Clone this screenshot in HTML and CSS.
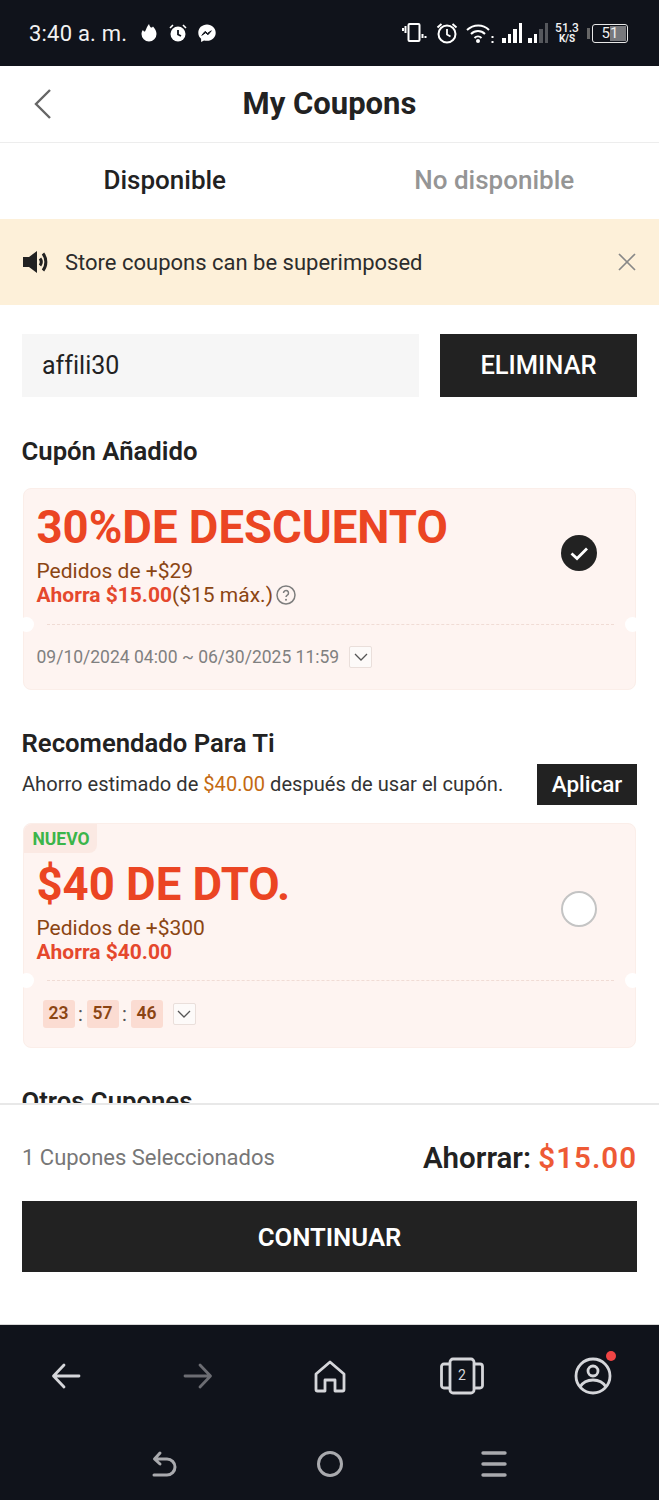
FILE: index.html
```html
<!DOCTYPE html>
<html>
<head>
  <title>My Coupons</title>
  <link rel="stylesheet" href="styles.css">
</head>
<body>

<div class="status">
  <div class="status-left">
    <span class="clock">3:40 a. m.</span>
    <svg class="st-icon" width="22" height="22" viewBox="0 0 22 22"><path fill="#fff" d="M11 2c1 3 2 4 3 3.500l1-1c2 2 3.500 5 3.500 7.500a7.500 7.500 0 0 1-15 0c0-1.500.5-3 1.500-4 .5 1 1 1.500 2 1.500C8.500 7 9 4 11 2z"/></svg>
    <svg class="st-icon" width="22" height="22" viewBox="0 0 22 22"><circle cx="11" cy="12" r="7.500" fill="#fff"/><path d="M11 8v4.500l3 1.500" fill="none" stroke="#10131b" stroke-width="1.800"/><path d="M3 6l3-3M19 6l-3-3" stroke="#fff" stroke-width="1.600"/></svg>
    <svg class="st-icon" width="22" height="22" viewBox="0 0 22 22"><path fill="#fff" d="M11 2.500c-5 0-8.700 3.600-8.700 8.200 0 2.500 1 4.600 2.800 6.100V20l2.900-1.600c.9.300 1.900.4 3 .4 5 0 8.700-3.600 8.700-8.100S16 2.500 11 2.500z"/><path d="M5.800 13.300l3.300-3.900 2.400 2 3.800-2.600-3.300 3.900-2.400-2z" fill="#10131b" stroke="#10131b" stroke-width="1"/></svg>
  </div>
  <div class="status-right">
    <svg width="27" height="24" viewBox="0 0 27 24"><rect x="7.500" y="3" width="11" height="17" rx="1" fill="none" stroke="#fff" stroke-width="2"/><path d="M2 7v3M4.500 5v7M21.500 13v4M24.500 15v2" stroke="#fff" stroke-width="2"/></svg>
    <svg width="24" height="24" viewBox="0 0 24 24"><circle cx="12" cy="13" r="8.500" fill="none" stroke="#fff" stroke-width="2"/><path d="M12 8v5.500l3.500 2" fill="none" stroke="#fff" stroke-width="1.800"/><path d="M2.500 6.500L6.500 3M21.500 6.500L17.500 3" stroke="#fff" stroke-width="2"/></svg>
    <svg width="29" height="24" viewBox="0 0 29 24"><g fill="none" stroke="#fff" stroke-width="2"><path d="M1 9c6.500-6 16-6 22 0"/><path d="M5 13c4-4 10-4 14 0"/><path d="M8.500 17c2-2 5-2 7 0"/></g><circle cx="12" cy="20" r="2" fill="#fff"/><path d="M26.500 15v2M26.500 20v2" stroke="#fff" stroke-width="2"/></svg>
    <div class="bars"><i class="b1"></i><i class="b2"></i><i class="b3"></i><i class="b4"></i></div>
    <div class="bars next"><i class="b1"></i><i class="b2"></i><i class="b3 dim"></i><i class="b4 dim"></i></div>
    <div class="speed"><span>51.3</span><span>K/S</span></div>
    <div class="battery"><i class="nub"></i><div class="cell"><i class="fill"></i><span>51</span></div></div>
  </div>
</div>

<div class="header">
  <svg class="back" width="22" height="32" viewBox="0 0 22 32"><path d="M19 2L5 16l14 14" fill="none" stroke="#666" stroke-width="2.400"/></svg>
  <h1>My Coupons</h1>
</div>

<div class="tabs">
  <div class="tab on">Disponible</div>
  <div class="tab">No disponible</div>
</div>

<div class="notice">
  <svg width="28" height="26" viewBox="0 0 28 26"><path fill="#222" d="M1 8h6l8-6v22l-8-6H1z"/><path d="M18 9.500c1.500 2 1.500 5 0 7M21 4.500c3.800 4.800 3.800 12.200 0 17" fill="none" stroke="#222" stroke-width="3"/></svg>
  <span class="notice-text">Store coupons can be superimposed</span>
  <svg class="notice-x" width="18" height="18" viewBox="0 0 18 18"><path d="M1 1l16 16M17 1L1 17" stroke="#888" stroke-width="1.700"/></svg>
</div>

<div class="main">
  <div class="code-row">
    <div class="code-input">affili30</div>
    <div class="code-btn">ELIMINAR</div>
  </div>

  <h2 class="added-title">Cupón Añadido</h2>

  <div class="coupon">
    <div class="coupon-top">
      <div class="coupon-info">
        <div class="amount">30%DE DESCUENTO</div>
        <div class="line">Pedidos de +$29</div>
        <div class="line"><b>Ahorra $15.00</b>($15 máx.)<svg class="help" width="20" height="20" viewBox="0 0 20 20"><circle cx="10" cy="10" r="9" fill="none" stroke="#7d7d7d" stroke-width="1.500"/><path d="M7.500 8a2.500 2.500 0 1 1 3.800 2.100c-.9.600-1.300 1-1.300 2" fill="none" stroke="#7d7d7d" stroke-width="1.500"/><circle cx="10" cy="14.800" r="1" fill="#7d7d7d"/></svg></div>
      </div>
      <svg class="pick" width="36" height="36" viewBox="0 0 36 36"><circle cx="18" cy="18" r="18" fill="#222"/><path d="M10.500 18.500l5.500 5 10-10" fill="none" stroke="#fff" stroke-width="2.800"/></svg>
    </div>
    <div class="coupon-cut"></div>
    <div class="coupon-bottom">
      <span class="dates">09/10/2024 04:00 ~ 06/30/2025 11:59</span>
      <span class="more"><svg width="14" height="8" viewBox="0 0 14 8"><path d="M1 1l6 6 6-6" fill="none" stroke="#555" stroke-width="1.300"/></svg></span>
    </div>
  </div>

  <h2 class="rec-title">Recomendado Para Ti</h2>
  <div class="rec-row">
    <div class="rec-text">Ahorro estimado de <em>$40.00</em> después de usar el cupón.</div>
    <div class="apply">Aplicar</div>
  </div>

  <div class="coupon second">
    <div class="tag">NUEVO</div>
    <div class="coupon-top">
      <div class="coupon-info">
        <div class="amount">$40 DE DTO.</div>
        <div class="line">Pedidos de +$300</div>
        <div class="line"><b>Ahorra $40.00</b></div>
      </div>
      <span class="pick-empty"></span>
    </div>
    <div class="coupon-cut"></div>
    <div class="coupon-bottom timer">
      <span class="digit">23</span><span class="colon">:</span><span class="digit">57</span><span class="colon">:</span><span class="digit">46</span>
      <span class="more"><svg width="14" height="8" viewBox="0 0 14 8"><path d="M1 1l6 6 6-6" fill="none" stroke="#555" stroke-width="1.300"/></svg></span>
    </div>
  </div>

  <h2 class="other-title">Otros Cupones</h2>
</div>

<div class="checkout">
  <div class="summary">
    <span class="selected">1 Cupones Seleccionados</span>
    <span class="saved">Ahorrar: <em>$15.00</em></span>
  </div>
  <div class="continue">CONTINUAR</div>
</div>

<div class="browser">
  <div class="browser-row">
    <svg width="32" height="32" viewBox="0 0 32 32"><path d="M29 16H4M14 5L3.500 16 14 27" fill="none" stroke="#d5d6da" stroke-width="2.800" stroke-linecap="round" stroke-linejoin="round"/></svg>
    <svg width="32" height="32" viewBox="0 0 32 32"><path d="M3 16h25M18 5l10.500 11L18 27" fill="none" stroke="#6c6d73" stroke-width="2.800" stroke-linecap="round" stroke-linejoin="round"/></svg>
    <svg width="32" height="34" viewBox="0 0 32 34"><path d="M2 15L16 3l14 12v15.500a1.500 1.500 0 0 1-1.500 1.500H21V21h-10v11H3.500A1.500 1.500 0 0 1 2 30.500z" fill="none" stroke="#d5d6da" stroke-width="2.800" stroke-linejoin="round"/></svg>
    <div class="tabs-ico">
      <svg width="44" height="38" viewBox="0 0 44 38"><rect x="10" y="2" width="24" height="34" rx="3" fill="none" stroke="#d5d6da" stroke-width="2.800"/><path d="M10 7H4a2.500 2.500 0 0 0-2.500 2.500v19A2.500 2.500 0 0 0 4 31h6M34 7h6a2.500 2.500 0 0 1 2.500 2.500v19A2.500 2.500 0 0 1 40 31h-6" fill="none" stroke="#d5d6da" stroke-width="2.800"/></svg>
      <span>2</span>
    </div>
    <div class="user-ico">
      <svg width="38" height="38" viewBox="0 0 38 38"><circle cx="19" cy="19" r="17" fill="none" stroke="#d5d6da" stroke-width="2.800"/><circle cx="19" cy="14" r="5" fill="none" stroke="#d5d6da" stroke-width="2.800"/><path d="M6 30c3-5 8-7 13-7s10 2 13 7" fill="none" stroke="#d5d6da" stroke-width="2.800"/></svg>
      <i class="dot"></i>
    </div>
  </div>
  <div class="sys-row">
    <svg width="26" height="28" viewBox="0 0 26 28"><path d="M2 25h13a8 8 0 0 0 0-16H3M8 3L2.500 9 8 14" fill="none" stroke="#a9aaae" stroke-width="3" stroke-linecap="round" stroke-linejoin="round"/></svg>
    <svg width="26" height="26" viewBox="0 0 26 26"><circle cx="13" cy="13" r="11.500" fill="none" stroke="#a9aaae" stroke-width="3"/></svg>
    <svg width="26" height="26" viewBox="0 0 26 26"><path d="M2 2h22M2 13h22M2 24h22" stroke="#a9aaae" stroke-width="3.400" stroke-linecap="round"/></svg>
  </div>
</div>

</body>
</html>
```

FILE: styles.css
```css
* { box-sizing: border-box; }
body { margin: 0; width: 659px; height: 1500px; overflow: hidden; display: flex; flex-direction: column; background: #fff; color: #222; font-family: Roboto, "Liberation Sans", sans-serif; }
h1, h2 { margin: 0; }

.status { height: 66px; background: #10131b; display: flex; justify-content: space-between; align-items: center; padding: 0 31px 0 29px; color: #f2f2f2; }
.status-left { display: flex; align-items: center; gap: 7px; }
.clock { font-size: 22px; margin-right: 4px; letter-spacing: .2px; }
.status-right { display: flex; align-items: center; gap: 7px; }
.bars { display: flex; align-items: flex-end; gap: 2px; height: 20px; }
.bars i { width: 3.500px; background: #fff; display: block; }
.bars .b1 { height: 5px; }
.bars .b2 { height: 9px; }
.bars .b3 { height: 14px; }
.bars .b4 { height: 20px; }
.bars .dim { background: #55575c; }
.bars.next { margin-left: -1px; }
.speed { display: flex; flex-direction: column; align-items: center; font-size: 12px; font-weight: 500; line-height: 11px; width: 26px; margin-left: -1px; }
.speed span:last-child { font-size: 10px; font-weight: 700; line-height: 10px; }
.battery { display: flex; align-items: center; }
.nub { width: 3px; height: 11px; background: #666; margin-right: 2px; display: block; }
.cell { position: relative; width: 36px; height: 19px; border: 1.500px solid #e8e8e8; border-radius: 3px; display: flex; align-items: center; justify-content: center; font-size: 15px; color: #eee; line-height: 1; }
.cell span { position: relative; }
.fill { position: absolute; left: 17px; top: 1px; bottom: 1px; right: 1px; background: #77787c; display: block; }

.header { height: 77px; padding-bottom: 2px; border-bottom: 1px solid #ededed; display: flex; align-items: center; justify-content: center; position: relative; }
.header h1 { font-size: 31px; font-weight: 700; color: #222; }
.back { position: absolute; left: 31px; top: 22px; }

.tabs { height: 76px; padding-bottom: 2px; display: flex; }
.tab { width: 50%; display: flex; align-items: center; justify-content: center; font-size: 26px; font-weight: 500; color: #959595; }
.tab.on { color: #222; }

.notice { height: 86px; background: #fdf0d9; display: flex; align-items: center; padding: 0 22px; }
.notice-text { margin-left: 15px; font-size: 22px; color: #2c2c2c; }
.notice-x { margin-left: auto; margin-right: 1px; }

.main { flex: 1; min-height: 0; overflow: hidden; padding: 29px 22px 0; }
.code-row { display: flex; justify-content: space-between; }
.code-input { width: 397px; height: 63px; background: #f6f6f6; display: flex; align-items: center; padding-left: 20px; font-size: 25px; color: #222; font-variant-ligatures: none; }
.code-btn { width: 197px; height: 63px; padding-bottom: 2px; background: #222; color: #fff; display: flex; align-items: center; justify-content: center; font-size: 25.500px; font-weight: 500; }

h2 { font-size: 25.700px; font-weight: 600; color: #222; line-height: 30px; margin-left: -.5px; }
.added-title { margin-top: 39px; }
.rec-title { margin-top: 38px; }

.coupon { position: relative; margin: 22px 0 0 .5px; width: 613.500px; background: #fef4f1; border: 1px solid #fbeee9; border-radius: 8px; }
.coupon-top { height: 135px; padding: 14px 13px 0; display: flex; justify-content: space-between; }
.amount { font-size: 45.500px; font-weight: 700; color: #eb4523; line-height: 50px; }
.line { font-size: 21px; line-height: 24px; color: #8b4513; display: flex; align-items: center; }
.amount + .line { margin-top: 6px; }
.line b { color: #e5482d; font-weight: 700; }
.help { margin-left: 3px; }
.pick { margin: 32px 25px 0 0; }
.pick-empty { width: 36px; height: 36px; margin: 31px 25px 0 0; border: 2px solid #c4c4c4; border-radius: 50%; background: #fff; }
.coupon-cut { position: relative; margin: 0 21px 0 23px; border-top: 1px dashed #f0dcd5; height: 0; }
.coupon-cut::before, .coupon-cut::after { content: ""; position: absolute; top: -8px; width: 15px; height: 15px; border-radius: 50%; background: #fff; }
.coupon-cut::before { left: -28px; }
.coupon-cut::after { right: -26px; }
.coupon-bottom { height: 64px; padding: 0 13px; display: flex; align-items: center; font-size: 17.500px; color: #808080; }
.more { display: flex; align-items: center; justify-content: center; width: 23px; height: 22px; margin-left: 10px; border: 1px solid #eadfdb; border-radius: 2px; background: #fdfaf9; }

.rec-row { display: flex; justify-content: space-between; align-items: center; margin-top: 6px; }
.rec-text { font-size: 20.100px; color: #333; margin-top: -2px; }
.rec-text em { font-style: normal; color: #c46a12; }
.apply { width: 100px; height: 41px; padding-bottom: 2px; background: #222; color: #fff; display: flex; align-items: center; justify-content: center; font-size: 22.500px; font-weight: 500; }

.second { margin-top: 18px; }
.second .coupon-top { height: 156px; padding-top: 36px; }
.tag { position: absolute; left: 0; top: 0; width: 73px; height: 29px; padding-left: 2px; background: #fbe9e3; border-radius: 8px 0 8px 0; color: #3bb54a; font-size: 17.500px; font-weight: 700; display: flex; align-items: center; justify-content: center; }
.timer { height: 66px; padding-left: 19px; }
.digit { width: 32px; height: 28px; padding-bottom: 3px; background: #fbdcd2; border-radius: 3px; color: #8b4513; font-size: 17.500px; font-weight: 600; display: flex; align-items: center; justify-content: center; }
.colon { width: 12px; text-align: center; color: #555; font-size: 20px; }
.other-title { margin-top: 38px; }

.checkout { height: 221px; border-top: 2px solid #e8e8e8; padding: 0 22px; background: #fff; }
.summary { height: 96px; display: flex; justify-content: space-between; align-items: center; padding-top: 9px; }
.selected { font-size: 22px; color: #777; }
.saved { font-size: 29.500px; font-weight: 600; color: #222; }
.saved em { font-style: normal; color: #ee5a35; letter-spacing: 1px; }
.continue { height: 71px; background: #222; color: #fff; display: flex; align-items: center; justify-content: center; font-size: 25.700px; font-weight: 600; }

.browser { height: 176px; background: #10131b; border-top: 1px solid #d8d8d8; padding-top: 26px; }
.browser-row { display: grid; grid-template-columns: repeat(5, 132px); height: 50px; align-items: center; justify-items: center; }
.tabs-ico, .user-ico { position: relative; display: flex; }
.user-ico { left: -1px; }
.tabs-ico span { position: absolute; left: 0; right: 0; top: 10px; text-align: center; color: #d5d6da; font-size: 14px; }
.dot { position: absolute; right: -4px; top: -6px; width: 10px; height: 10px; border-radius: 50%; background: #f04545; display: block; }
.sys-row { display: grid; grid-template-columns: repeat(3, 164.500px); padding-left: 83px; margin-top: 49px; justify-items: center; align-items: center; }
.browser svg { display: block; }
```
